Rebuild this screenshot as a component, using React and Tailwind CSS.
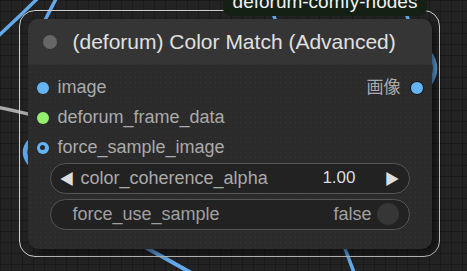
import React from "react";

const Wires = () => (
  <svg className="absolute inset-0" width="467" height="271" viewBox="0 0 467 271" fill="none">
    <g stroke="#64a9ea" strokeWidth="3.5" strokeLinecap="round">
      <path d="M -4 38 Q 18 18 38 -2" />
      <path d="M 57 -3 L 43 24" />
      <path d="M 272 10 L 276 22" />
      <path d="M 405 10 L 409 22" />
      <path d="M 29 142 Q 21 152 29 163" strokeWidth="4.5" />
      <path d="M 429 52 Q 441 68 429 85" strokeWidth="4.5" />
      <path d="M 145 247 L 195 275" strokeWidth="4" />
      <path d="M 344 246 L 355 275" />
    </g>
    <path d="M -4 107 Q 12 110 32 115" stroke="#a9a9a9" strokeWidth="3.5" />
  </svg>
);

const Slot = ({ color, ring }) => (
  <span
    className="w-[12px] h-[12px] rounded-full flex items-center justify-center shrink-0"
    style={{ backgroundColor: color }}
  >
    {ring && <span className="w-[5px] h-[5px] rounded-full bg-[#2a2a2a]" />}
  </span>
);

export default function App() {
  return (
    <div className="relative w-[467px] h-[271px] overflow-hidden bg-[#232323] bg-[linear-gradient(#1a1a1a_1px,transparent_1px),linear-gradient(90deg,#1a1a1a_1px,transparent_1px)] bg-[size:11px_11px] font-['Liberation_Sans','Noto_Sans_CJK_JP',sans-serif]">
      <Wires />

      {/* 選択枠 + ノード */}
      <div className="absolute left-[19px] top-[10px] w-[421px] h-[247px] rounded-[16px] border-[1.5px] border-[#cfcfcf] p-[7.5px]">
        <div className="w-full h-full rounded-[10px] overflow-hidden bg-[#2b2b2b] shadow-[4px_5px_8px_rgba(0,0,0,0.55)] flex flex-col">
          <div className="h-[46px] shrink-0 bg-[#353535] flex items-center pl-[15px] gap-[16px] border-b border-[#303030] pt-[1px]">
            <span className="w-[14px] h-[14px] rounded-full bg-[#666]" />
            <span className="text-[21px] text-[#e0e0e0] leading-none">
              (deforum) Color Match (Advanced)
            </span>
          </div>

          <div className="flex-1 bg-[radial-gradient(#353535_0.8px,transparent_0.8px)] bg-[size:5px_5px] pt-[8px]">
            <div className="h-[30px] flex items-center pl-[9px] pr-[8px]">
              <Slot color="#64b5f6" />
              <span className="ml-[9px] text-[18px] text-[#aaa]">image</span>
              <span className="ml-auto text-[17px] text-[#aaa]">画像</span>
              <span className="ml-[9px] w-[14px] h-[14px] rounded-full bg-[#64b5f6] border-[1.5px] border-[#111]" />
            </div>
            <div className="h-[30px] flex items-center pl-[9px]">
              <Slot color="#94ef6e" />
              <span className="ml-[9px] text-[18px] text-[#aaa]">deforum_frame_data</span>
            </div>
            <div className="h-[30px] flex items-center pl-[9px]">
              <Slot color="#64b5f6" ring />
              <span className="ml-[9px] text-[18px] text-[#aaa]">force_sample_image</span>
            </div>

            <div className="px-[22px] flex flex-col gap-[5px]">
              <div className="h-[31px] rounded-full bg-[#222] border-[1.5px] border-[#555] flex items-center pl-[9px] pr-[9px]">
                <span className="text-[#ddd] text-[15px] leading-none">◀</span>
                <span className="ml-[6px] text-[18px] text-[#aaa]">color_coherence_alpha</span>
                <span className="ml-auto text-[17px] text-[#ddd]">1.00</span>
                <span className="ml-[29px] text-[#ddd] text-[15px] leading-none">▶</span>
              </div>
              <div className="h-[31px] rounded-full bg-[#222] border-[1.5px] border-[#555] flex items-center pl-[22px] pr-[10px]">
                <span className="text-[18px] text-[#a0a0a0]">force_use_sample</span>
                <span className="ml-auto text-[18px] text-[#a0a0a0]">false</span>
                <span className="ml-[5px] w-[22px] h-[22px] rounded-full bg-[#363636]" />
              </div>
            </div>
          </div>
        </div>
      </div>

      {/* パックバッジ */}
      <div className="absolute left-[223px] top-[-10px] w-[204px] h-[26px] rounded-[8px] bg-[#142014] flex justify-center">
        <span className="text-[19px] leading-[19px] text-[#f2f2f2] mt-[1.5px]">deforum-comfy-nodes</span>
      </div>
    </div>
  );
}
